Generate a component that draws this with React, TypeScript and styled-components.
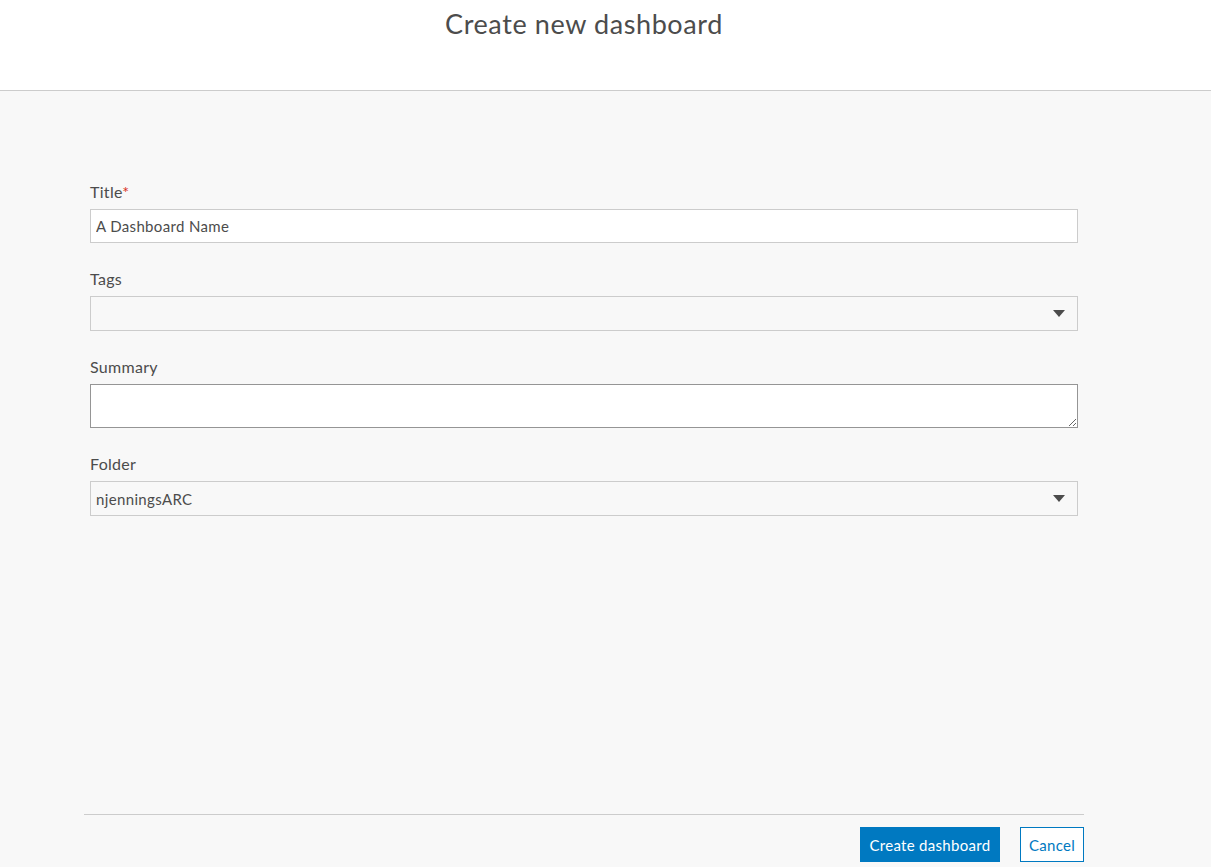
import styled, { createGlobalStyle } from "styled-components";

const GlobalStyle = createGlobalStyle`
  html, body {
    margin: 0;
    padding: 0;
    height: 100%;
  }
  body {
    font-family: Lato, "Open Sans", "Liberation Sans", sans-serif;
    color: #4c4c4c;
    background: #f8f8f8;
  }
  #root {
    height: 100%;
  }
`;

const Caret = () => (
  <svg width="12" height="7" viewBox="0 0 12 7">
    <path d="M0 0 H12 L6 7 Z" fill="#4c4c4c" />
  </svg>
);

const App = () => {
  return (
    <>
      <GlobalStyle />
      <Page>
        <Header>
          <HeaderTitle>Create new dashboard</HeaderTitle>
        </Header>
        <Body>
          <Form>
            <Field>
              <Label>
                Title<Required>*</Required>
              </Label>
              <TextInput defaultValue="A Dashboard Name" />
            </Field>
            <Field>
              <Label>Tags</Label>
              <SelectBox>
                <span></span>
                <Caret />
              </SelectBox>
            </Field>
            <Field>
              <Label>Summary</Label>
              <TextArea />
            </Field>
            <Field>
              <Label>Folder</Label>
              <SelectBox>
                <span>njenningsARC</span>
                <Caret />
              </SelectBox>
            </Field>
          </Form>
          <Footer>
            <PrimaryButton>Create dashboard</PrimaryButton>
            <OutlineButton>Cancel</OutlineButton>
          </Footer>
        </Body>
      </Page>
    </>
  );
};

export default App;

const Page = styled.div`
  display: flex;
  flex-direction: column;
  height: 867px;
`;

const Header = styled.header`
  height: 90px;
  background: #ffffff;
  border-bottom: 1px solid #cccccc;
  padding-left: 84px;
  box-sizing: content-box;
`;

const HeaderTitle = styled.h1`
  width: 1000px;
  margin: 0;
  padding-top: 7px;
  text-align: center;
  font-size: 27px;
  font-weight: 400;
  letter-spacing: 0.6px;
  line-height: 34px;
  color: #4c4c4c;
`;

const Body = styled.main`
  flex: 1;
  display: flex;
  flex-direction: column;
  width: 1000px;
  margin-left: 84px;
`;

const Form = styled.div`
  flex: 1;
  display: flex;
  flex-direction: column;
  gap: 26px;
  padding: 91px 6px 0;
`;

const Field = styled.div`
  display: flex;
  flex-direction: column;
  gap: 7px;
`;

const Label = styled.label`
  font-size: 16px;
  letter-spacing: 0.3px;
  line-height: 20px;
  color: #4c4c4c;
`;

const Required = styled.span`
  color: #d83020;
`;

const TextInput = styled.input`
  box-sizing: border-box;
  height: 34px;
  padding: 0 5px;
  border: 1px solid #cccccc;
  background: #ffffff;
  font-family: inherit;
  font-size: 15px;
  letter-spacing: 0.35px;
  color: #4c4c4c;
  outline: none;
`;

const SelectBox = styled.div`
  box-sizing: border-box;
  height: 35px;
  display: flex;
  align-items: center;
  justify-content: space-between;
  padding: 0 12px 0 5px;
  border: 1px solid #cccccc;
  background: #f8f8f8;
  font-size: 15px;
  letter-spacing: 0.35px;
  color: #4c4c4c;
`;

const TextArea = styled.textarea`
  box-sizing: border-box;
  height: 44px;
  padding: 5px;
  border: 1px solid #959595;
  background: #ffffff;
  resize: vertical;
  font-family: inherit;
  font-size: 15px;
  outline: none;
`;

const Footer = styled.footer`
  display: flex;
  justify-content: flex-end;
  gap: 20px;
  border-top: 1px solid #cccccc;
  padding: 12px 0 5px;
`;

const PrimaryButton = styled.button`
  height: 35px;
  width: 140px;
  padding: 0;
  border: 1px solid #0079c1;
  background: #0079c1;
  color: #ffffff;
  font-family: inherit;
  font-size: 15px;
  letter-spacing: 0.3px;
  cursor: pointer;
`;

const OutlineButton = styled.button`
  height: 35px;
  width: 64px;
  padding: 0;
  border: 1px solid #0079c1;
  background: #ffffff;
  color: #0079c1;
  font-family: inherit;
  font-size: 15px;
  letter-spacing: 0.3px;
  cursor: pointer;
`;
